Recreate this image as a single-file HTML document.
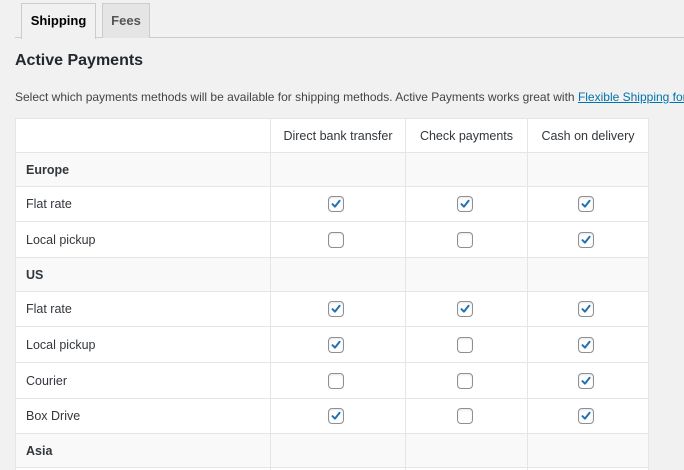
<!DOCTYPE html>
<html><head><style>
*{box-sizing:border-box;margin:0;padding:0}
html,body{width:684px;height:470px;overflow:hidden}
body{background:#f1f1f1;font-family:"Liberation Sans",sans-serif;color:#23282d;position:relative}
.tabline{position:absolute;left:15px;width:669px;top:37px;border-top:1px solid #ccc}
.tab{position:absolute;top:3px;height:35px;border:1px solid #ccc;border-bottom:none;font-size:13px;font-weight:bold;line-height:33px;text-align:center}
.t1{left:21px;width:75px;background:#f1f1f1;color:#000;height:36px}
.t2{left:102px;width:48px;background:#e5e5e5;color:#555}
h2{position:absolute;left:15px;top:52px;font-size:16px;font-weight:bold;color:#23282d}
p{position:absolute;left:15px;top:90px;width:669px;overflow:hidden;font-size:12px;color:#444;white-space:nowrap}
p a{color:#0073aa;text-decoration:underline}
table{position:absolute;left:15px;top:118px;border-collapse:collapse;background:#fff;font-size:12.5px}
td{border:1px solid #e5e5e5;height:35px;padding:0 10px;color:#32373c}
td.c{text-align:center}
tr.g td{background:#f9f9f9;font-weight:bold;height:34px}
tr.h td{height:34px;text-align:center}
tr.t td{height:36px}
.cb{display:inline-block;width:16px;height:16px;border:1px solid #8c8f94;border-radius:4px;background:#fff;vertical-align:middle;position:relative;box-shadow:inset 0 1px 2px rgba(0,0,0,.1);margin-left:-4px}
.cb svg{position:absolute;left:1px;top:1px}
</style></head><body>
<div class="tabline"></div>
<div class="tab t1">Shipping</div>
<div class="tab t2">Fees</div>
<h2>Active Payments</h2>
<p>Select which payments methods will be available for shipping methods. Active Payments works great with <a>Flexible Shipping for WooCommerce</a></p>
<table>
<colgroup><col style="width:255px"><col style="width:135px"><col style="width:122px"><col style="width:121px"></colgroup>
<tr class="h"><td></td><td>Direct bank transfer</td><td>Check payments</td><td>Cash on delivery</td></tr>
<tr class="g"><td>Europe</td><td></td><td></td><td></td></tr>
<tr><td>Flat rate</td><td class="c"><span class="cb k"></span></td><td class="c"><span class="cb k"></span></td><td class="c"><span class="cb k"></span></td></tr>
<tr class="t"><td>Local pickup</td><td class="c"><span class="cb"></span></td><td class="c"><span class="cb"></span></td><td class="c"><span class="cb k"></span></td></tr>
<tr class="g"><td>US</td><td></td><td></td><td></td></tr>
<tr><td>Flat rate</td><td class="c"><span class="cb k"></span></td><td class="c"><span class="cb k"></span></td><td class="c"><span class="cb k"></span></td></tr>
<tr class="t"><td>Local pickup</td><td class="c"><span class="cb k"></span></td><td class="c"><span class="cb"></span></td><td class="c"><span class="cb k"></span></td></tr>
<tr class="t"><td>Courier</td><td class="c"><span class="cb"></span></td><td class="c"><span class="cb"></span></td><td class="c"><span class="cb k"></span></td></tr>
<tr><td>Box Drive</td><td class="c"><span class="cb k"></span></td><td class="c"><span class="cb"></span></td><td class="c"><span class="cb k"></span></td></tr>
<tr class="g"><td>Asia</td><td></td><td></td><td></td></tr>
<tr><td>Flat rate</td><td></td><td></td><td></td></tr>
</table>
<script>
document.querySelectorAll('.cb.k').forEach(function(e){e.innerHTML='<svg width="12" height="12" viewBox="0 0 12 12"><path d="M2.5 6.2 L5 8.6 L9.6 2.8" fill="none" stroke="#2271b1" stroke-width="2" stroke-linecap="round" stroke-linejoin="round"/></svg>';});
</script>
</body></html>
